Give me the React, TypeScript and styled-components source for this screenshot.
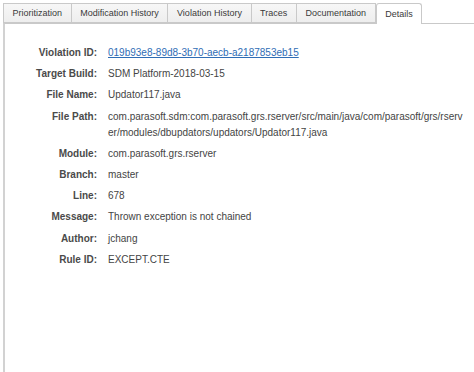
import { Fragment } from "react";
import styled, { createGlobalStyle } from "styled-components";

const GlobalStyle = createGlobalStyle`
  html, body {
    margin: 0;
    padding: 0;
    background: #ffffff;
  }
  body {
    font-family: "Liberation Sans", Arial, Helvetica, sans-serif;
  }
  * {
    box-sizing: border-box;
  }
`;

const tabs = [
  "Prioritization",
  "Modification History",
  "Violation History",
  "Traces",
  "Documentation",
  "Details",
];

type Detail = {
  label: string;
  value: string;
  link?: boolean;
  path?: boolean;
};

const details: Detail[] = [
  { label: "Violation ID:", value: "019b93e8-89d8-3b70-aecb-a2187853eb15", link: true },
  { label: "Target Build:", value: "SDM Platform-2018-03-15" },
  { label: "File Name:", value: "Updator117.java" },
  {
    label: "File Path:",
    value:
      "com.parasoft.sdm:com.parasoft.grs.rserver/src/main/java/com/parasoft/grs/rserver/modules/dbupdators/updators/Updator117.java",
    path: true,
  },
  { label: "Module:", value: "com.parasoft.grs.rserver" },
  { label: "Branch:", value: "master" },
  { label: "Line:", value: "678" },
  { label: "Message:", value: "Thrown exception is not chained" },
  { label: "Author:", value: "jchang" },
  { label: "Rule ID:", value: "EXCEPT.CTE" },
];

const Page = styled.div`
  height: 372px;
  padding: 3px 0 0 3px;
  display: flex;
  flex-direction: column;
  overflow: hidden;
`;

const TabBar = styled.div`
  display: flex;
  align-items: flex-end;
  height: 20px;
  position: relative;
  z-index: 1;
`;

const Tab = styled.div<{ $active?: boolean }>`
  height: ${(p) => (p.$active ? "21px" : "20px")};
  margin-bottom: ${(p) => (p.$active ? "-1px" : "0")};
  padding: 0 8.6px;
  display: flex;
  align-items: center;
  font-size: 9px;
  color: #3a3a3a;
  background: ${(p) => (p.$active ? "#ffffff" : "linear-gradient(#f7f7f7, #eeeeee)")};
  border: 1px solid #c9c9c9;
  border-bottom: ${(p) => (p.$active ? "none" : "1px solid #c9c9c9")};
  border-left-width: ${(p) => (p.$active ? "1px" : "0")};
  border-radius: ${(p) => (p.$active ? "3px 3px 0 0" : "0")};
  white-space: nowrap;

  &:first-child {
    border-left-width: 1px;
  }
`;

const Panel = styled.div`
  flex: 1;
  border-top: 1px solid #c9c9c9;
  border-left: 2px solid #d2d2d2;
  padding: 21px 8px 0 0;
`;

const DetailGrid = styled.div`
  display: grid;
  grid-template-columns: 92px 356px;
  column-gap: 11px;
  row-gap: 5.2px;
  font-size: 10px;
  line-height: 16px;
`;

const Label = styled.div`
  text-align: right;
  font-weight: bold;
  color: #4a4a4a;
  white-space: nowrap;
`;

const Value = styled.div<{ $path?: boolean }>`
  color: #444444;
  word-break: ${(p) => (p.$path ? "break-all" : "normal")};
`;

const Link = styled.a`
  color: #2f6db5;
  text-decoration: underline;
`;

export default function App() {
  return (
    <>
      <GlobalStyle />
      <Page>
        <TabBar>
          {tabs.map((t) => (
            <Tab key={t} $active={t === "Details"}>
              {t}
            </Tab>
          ))}
        </TabBar>
        <Panel>
          <DetailGrid>
            {details.map((d) => (
              <Fragment key={d.label}>
                <Label>{d.label}</Label>
                <Value $path={d.path}>
                  {d.link ? <Link href="#">{d.value}</Link> : d.value}
                </Value>
              </Fragment>
            ))}
          </DetailGrid>
        </Panel>
      </Page>
    </>
  );
}
